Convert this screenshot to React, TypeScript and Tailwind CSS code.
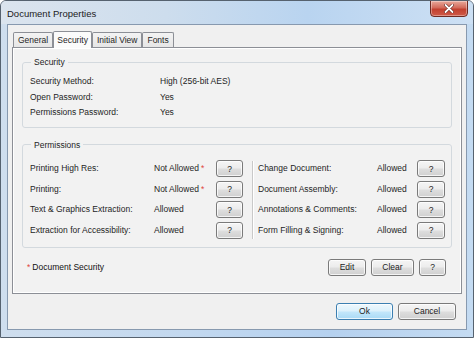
import type { ReactNode } from "react";

const FONT = "font-['Liberation_Sans',Arial,sans-serif]";

interface WinButtonProps {
  children: ReactNode;
  className?: string;
  primary?: boolean;
}

function WinButton({ children, className = "", primary = false }: WinButtonProps) {
  const skin = primary
    ? "border-[#3c7fb1] bg-[linear-gradient(180deg,#eef8fd_0%,#dcf1fc_48%,#c3e7fb_52%,#a9daf6_100%)]"
    : "border-[#7a7a7a] bg-[linear-gradient(180deg,#f5f5f5_0%,#ececec_48%,#dedede_52%,#d0d0d0_100%)]";
  return (
    <button
      type="button"
      className={`flex h-[17px] shrink-0 items-center justify-center rounded-[3px] border text-[8.5px] leading-none text-[#1c1c1c] shadow-[inset_0_0_0_1px_rgba(255,255,255,0.75)] ${skin} ${className}`}
    >
      {children}
    </button>
  );
}

function Star() {
  return <span className="ml-[2px] text-[#e0463a]">*</span>;
}

interface PermRow {
  label: string;
  value: string;
  starred?: boolean;
}

const leftPerms: PermRow[] = [
  { label: "Printing High Res:", value: "Not Allowed", starred: true },
  { label: "Printing:", value: "Not Allowed", starred: true },
  { label: "Text & Graphics Extraction:", value: "Allowed" },
  { label: "Extraction for Accessibility:", value: "Allowed" },
];

const rightPerms: PermRow[] = [
  { label: "Change Document:", value: "Allowed" },
  { label: "Document Assembly:", value: "Allowed" },
  { label: "Annotations & Comments:", value: "Allowed" },
  { label: "Form Filling & Signing:", value: "Allowed" },
];

const tabs = ["General", "Security", "Initial View", "Fonts"];

export default function App() {
  return (
    <div
      className={`flex h-[338px] w-[474px] flex-col overflow-hidden rounded-t-[6px] border border-[#56626f] bg-[linear-gradient(90deg,#cfdeee_0%,#c2d8ef_40%,#b5d1ef_70%,#c4dbf2_100%)] ${FONT}`}
    >
      {/* title bar */}
      <div className="flex h-[23px] shrink-0 items-start justify-between bg-[linear-gradient(90deg,#dbe4ee_0%,#cddded_35%,#b9d4f0_65%,#cde0f4_100%)] pl-[6px] pr-[5px]">
        <span className="pt-[7px] text-[9.5px] leading-[12px] text-[#1b1b1b]">
          Document Properties
        </span>
        <div className="-mt-px flex h-[17px] w-[38px] items-center justify-center rounded-b-[4px] border border-[#6e2a22] bg-[linear-gradient(180deg,#e9a99b_0%,#d26a5a_45%,#c2402f_55%,#cf5a48_100%)] shadow-[inset_0_0_0_1px_rgba(255,255,255,0.35)]">
          <svg width="10" height="9" viewBox="0 0 10 9">
            <path d="M1.5 1 L8.5 8 M8.5 1 L1.5 8" stroke="#5a1e18" strokeWidth="3" strokeLinecap="round" />
            <path d="M1.5 1 L8.5 8 M8.5 1 L1.5 8" stroke="#ffffff" strokeWidth="1.8" strokeLinecap="round" />
          </svg>
        </div>
      </div>

      {/* client area */}
      <div className="mx-[6px] mb-[7px] flex flex-1 flex-col border border-[#8799af] bg-[#f0f0f0] text-[8.5px] text-[#1e1e1e]">
        {/* tab strip */}
        <div className="flex h-[22px] items-end pl-[5px] pt-[5px]">
          {tabs.map((tab) => {
            const active = tab === "Security";
            return (
              <div
                key={tab}
                className={
                  active
                    ? "relative z-10 -mb-px flex h-[17px] items-center rounded-t-[2px] border border-b-0 border-[#8c8f96] bg-[#fbfbfb] px-[3px] leading-none"
                    : "flex h-[15px] items-center rounded-t-[2px] border border-b-0 border-[#8c8f96] bg-[linear-gradient(180deg,#f3f3f3_0%,#e6e6e6_100%)] px-[4px] leading-none"
                }
              >
                {tab}
              </div>
            );
          })}
        </div>

        {/* tab panel */}
        <div className="mx-[4px] flex h-[247px] flex-col border border-[#8c8f96] bg-[#f2f2f2] px-[9px] pt-[9px] shadow-[inset_0_0_0_1px_#ffffff]">
          <fieldset className="rounded-[3px] border border-[#d3d9de] px-[7px] pb-[6px]">
            <legend className="ml-[1px] px-[3px] leading-[10px]">Security</legend>
            <div className="pt-[7px]">
              <div className="flex h-[15.5px] items-center">
                <span className="w-[130px]">Security Method:</span>
                <span>High (256-bit AES)</span>
              </div>
              <div className="flex h-[15.5px] items-center">
                <span className="w-[130px]">Open Password:</span>
                <span>Yes</span>
              </div>
              <div className="flex h-[15.5px] items-center">
                <span className="w-[130px]">Permissions Password:</span>
                <span>Yes</span>
              </div>
            </div>
          </fieldset>

          <fieldset className="mt-[12px] rounded-[3px] border border-[#d3d9de] pb-[6px] pl-[7px]">
            <legend className="ml-[1px] px-[3px] leading-[10px]">Permissions</legend>
            <div className="flex pt-[9px]">
              <div className="flex flex-col">
                {leftPerms.map((row) => (
                  <div key={row.label} className="flex h-[20.5px] items-center">
                    <span className="w-[124px]">{row.label}</span>
                    <span className="w-[62px]">
                      {row.value}
                      {row.starred ? <Star /> : null}
                    </span>
                    <WinButton className="w-[27px]">?</WinButton>
                  </div>
                ))}
              </div>
              <div className="ml-[9px] my-[2px] border-l border-[#c9c9c9] shadow-[1px_0_0_#ffffff]" />
              <div className="flex flex-col pl-[5px]">
                {rightPerms.map((row) => (
                  <div key={row.label} className="flex h-[20.5px] items-center">
                    <span className="w-[119px]">{row.label}</span>
                    <span className="w-[40px]">{row.value}</span>
                    <WinButton className="w-[28px]">?</WinButton>
                  </div>
                ))}
              </div>
            </div>
          </fieldset>

          <div className="mt-[11px] flex items-center justify-between pl-[5px] pr-[6px]">
            <span className="text-[#111]">
              <span className="mr-[2px] text-[#e0463a]">*</span>Document Security
            </span>
            <div className="flex gap-[5px]">
              <WinButton className="w-[38px]">Edit</WinButton>
              <WinButton className="w-[43px]">Clear</WinButton>
              <WinButton className="w-[27px]">?</WinButton>
            </div>
          </div>
        </div>

        {/* dialog buttons */}
        <div className="mt-[9px] flex justify-end gap-[5px] pr-[10px]">
          <WinButton primary className="w-[57px]">Ok</WinButton>
          <WinButton className="w-[58px]">Cancel</WinButton>
        </div>
      </div>
    </div>
  );
}
